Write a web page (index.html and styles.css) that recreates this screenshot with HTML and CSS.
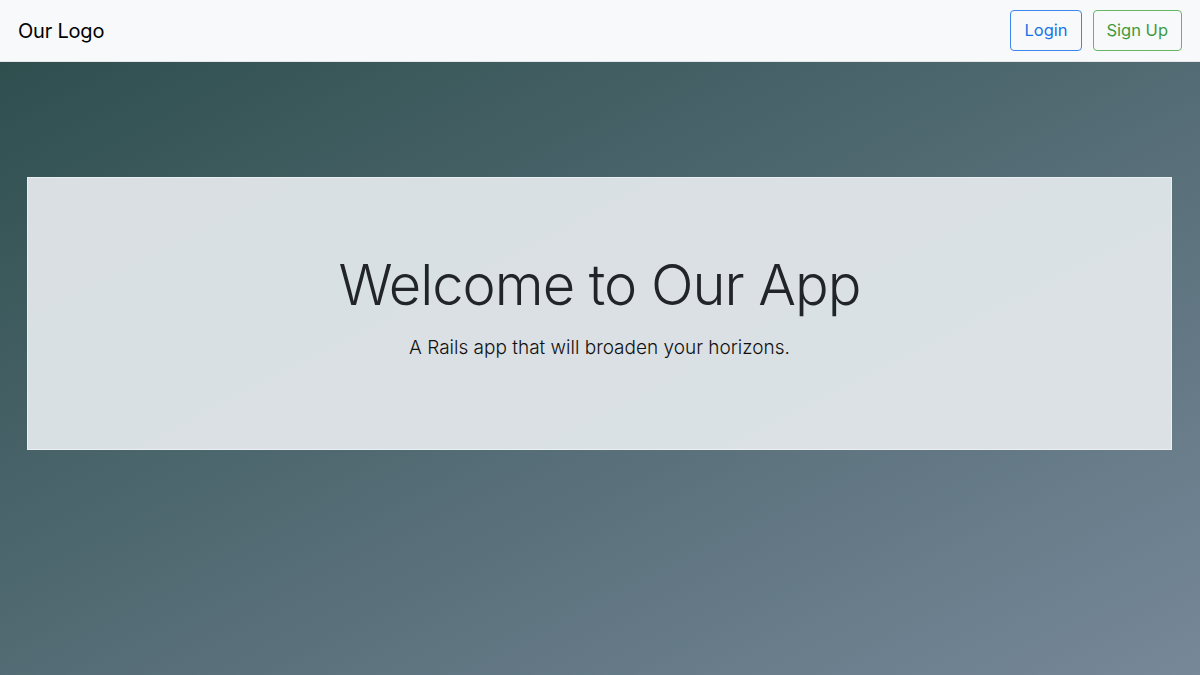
FILE: index.html
```html
<!DOCTYPE html>
<html lang="en">
<head>
<meta charset="utf-8">
<title>Our App</title>
<link rel="stylesheet" href="styles.css">
</head>
<body>
<div class="page">
  <nav class="navbar">
    <a class="brand" href="#">Our Logo</a>
    <div class="actions">
      <a class="btn btn-login" href="#">Login</a>
      <a class="btn btn-signup" href="#">Sign Up</a>
    </div>
  </nav>
  <main class="hero">
    <section class="jumbotron">
      <h1 class="title">Welcome to Our App</h1>
      <p class="lead">A Rails app that will broaden your horizons.</p>
    </section>
  </main>
</div>
</body>
</html>
```
FILE: styles.css
```css
html, body {
  margin: 0;
  padding: 0;
  height: 100%;
}
body {
  font-family: Inter, "Liberation Sans", sans-serif;
  color: #212529;
}
.page {
  display: flex;
  flex-direction: column;
  min-height: 100%;
}
.navbar {
  height: 62px;
  box-sizing: border-box;
  background: #f8f9fa;
  border-bottom: 1px solid #e5e7e9;
  display: flex;
  align-items: center;
  justify-content: space-between;
  padding: 0 18px 0 18px;
}
.brand {
  font-size: 20px;
  color: #000;
  text-decoration: none;
  letter-spacing: -0.2px;
}
.actions {
  display: flex;
  gap: 11px;
}
.btn {
  display: inline-block;
  font-size: 16.5px;
  line-height: 21px;
  padding: 9px 13px;
  border-radius: 4px;
  border: 1px solid;
  text-decoration: none;
  background: transparent;
}
.btn-login {
  color: #1a73e8;
  border-color: #3d86f0;
}
.btn-signup {
  color: #3f9a3f;
  border-color: #67b667;
}
.hero {
  flex: 1;
  background: linear-gradient(to bottom right, #2f4f4f 0%, #778899 100%);
  padding: 115px 28px 0 27px;
}
.jumbotron {
  height: 273px;
  box-sizing: border-box;
  background: rgba(226, 231, 234, 0.95);
  border: 1px solid rgba(240, 243, 245, 0.8);
  text-align: center;
  padding-top: 74px;
}
.title {
  margin: 0;
  font-size: 56px;
  font-weight: 300;
  line-height: 1.2;
  letter-spacing: -1px;
  color: #212529;
}
.lead {
  margin: 17px 0 0;
  font-size: 19px;
  font-weight: 300;
  color: #111;
}
```
